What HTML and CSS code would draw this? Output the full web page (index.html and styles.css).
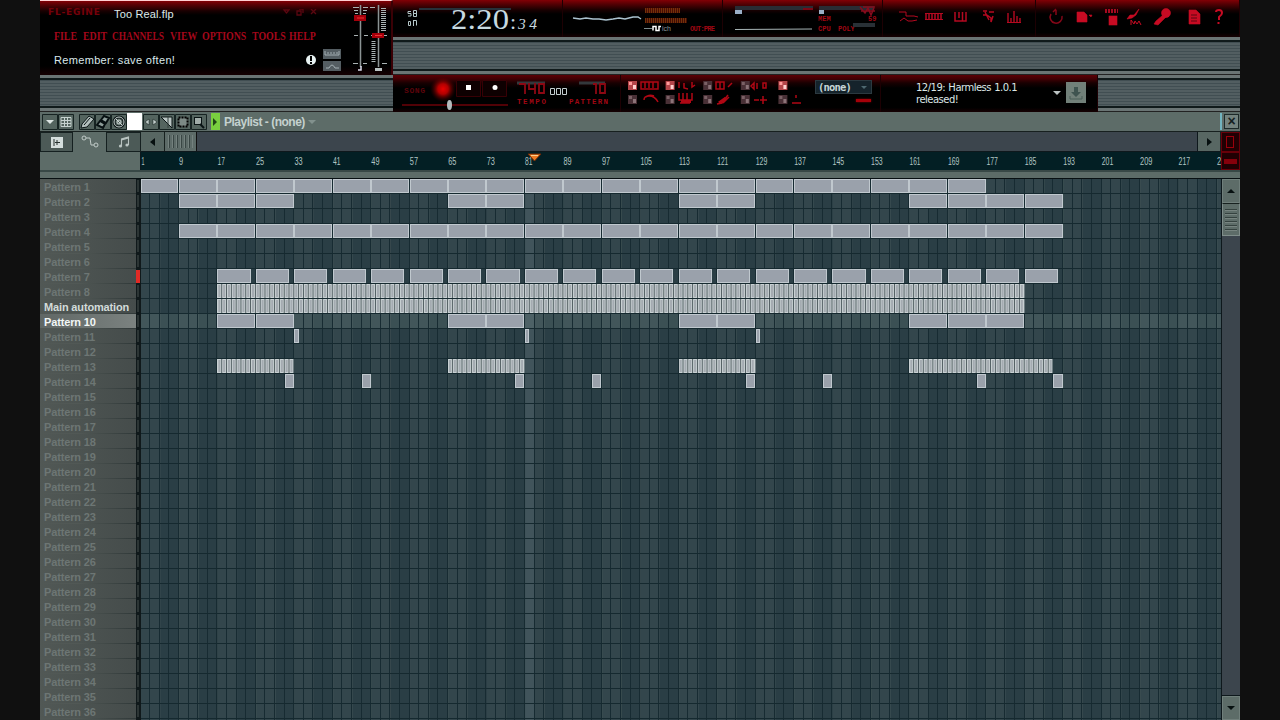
FILE: index.html
```html
<!DOCTYPE html>
<html lang="en">
<head>
<meta charset="utf-8">
<title>Too Real.flp</title>
<link rel="stylesheet" href="styles.css">
</head>
<body>
<div class="app">
  <header class="top">
    <div class="col-left">
      <section class="panel main-panel">
        <div class="main-info">
          <div class="title-row"><span class="logo">FL-EGINE</span><span class="file">Too Real.flp</span>
            <svg class="winbtns" width="36" height="10"><path d="M2 1h5L4.500 4zM15 2h4v4h-4zM17 0h4v4M29 0l5 5M34 0l-5 5" fill="none" stroke="#5c0711" stroke-width="1.300"/></svg></div>
          <nav class="menu"><span class="m1">FILE</span><span class="m2">EDIT</span><span class="m3">CHANNELS</span><span class="m4">VIEW</span><span class="m5">OPTIONS</span><span class="m6">TOOLS</span><span class="m7">HELP</span></nav>
          <div class="hint"><span>Remember: save often!</span>
            <svg width="38" height="24"><circle cx="7" cy="12" r="5" fill="#e8f2f2"/><path d="M7 8v5M7 14v2" stroke="#000" stroke-width="2"/><rect x="19" y="1" width="18" height="10" fill="#545d62"/><rect x="19" y="13" width="18" height="10" fill="#545d62"/><path d="M21 3v4h14v-4M24 4v2M27 4v2M30 4v2M33 4v2M22 20h3q3-6 6 0h4" fill="none" stroke="#a3afb3"/></svg></div>
        </div>
        <svg class="faders" width="38" height="74">
          <path d="M7.500 4v62M25.500 4v62" stroke="#8b9394" stroke-width="1.500"/>
          <path d="M0 6.500h6M10 6.500h5M1 9.500h4M10 9.500h4M2 12.500h3M10 12.500h3M1 34.500h4M11 34.500h4M0 62.500h5M10 62.500h4M17 6.500h5M18 34.500h3M31 34.500h3M29 62.500h5" stroke="#a9b2b3"/>
          <path d="M30.500 7v24" stroke="#a9b2b3" stroke-width="5" stroke-dasharray="1 1"/><path d="M20.500 40v22" stroke="#a9b2b3" stroke-width="4" stroke-dasharray="1 1"/>
          <rect x="1" y="14" width="12" height="6" fill="#a5000b"/><rect x="19" y="32" width="12" height="5" fill="#a5000b"/><path d="M4 17h7M22 34.500h7" stroke="#e33"/>
          <path d="M5 69h3v-4" stroke="#dde" fill="none" stroke-width="1.500"/><rect x="22" y="67" width="7" height="3" fill="#b9c1c2"/>
        </svg>
      </section>
      <div class="stripes grow"></div>
    </div>
    <div class="col-right">
      <div class="row first">
        <section class="panel time"><svg width="169" height="37">
          <rect x="26" y="8" width="92" height="2" fill="#26313a"/>
          <g fill="none" stroke="#b4c6c8"><path d="M18 11.500h-3v2h3v2.500h-3M15.500 21.500h2v4h-2z"/><path d="M20.500 10.500h3v6h-3zM20.500 13.500h3M20.500 20.500h3v5M20.500 20v6"/></g>
          <text class="clock" x="58" y="29" font-size="30" textLength="58" lengthAdjust="spacingAndGlyphs">2:20</text><text class="clock" x="117" y="29" font-size="22">:</text><text class="clock it" x="125" y="29" font-size="15.500" textLength="19">34</text>
        </svg></section>
        <section class="panel scope"><svg width="159" height="37">
          <path d="M10 18l7 1 6-1 7 1 6 0 7 1 7-1 6-1 6 1 8-2 5 0 3 2" fill="none" stroke="#abc2cf" stroke-width="1.500"/>
          <path d="M82 10.500h35M82 20.500h42" stroke="#6e1508" stroke-width="5" opacity=".6"/><path d="M82 10.500h35M82 20.500h42" stroke="#7e3c0b" stroke-width="5" stroke-dasharray="1 1" opacity=".8"/>
          <path d="M81 28.500h8" stroke="#7c8a8c"/><path d="M90 30.500v-4h3v4h3v-4h2" fill="none" stroke="#fff" stroke-width="1.500"/><text x="99" y="31" font-size="7" fill="#8a9698">ich</text>
          <text class="lcd" x="127" y="31" font-size="7" textLength="25">OUT:PRE</text>
        </svg></section>
        <section class="panel cpu"><svg width="159" height="37">
          <rect x="12" y="6" width="78" height="4" fill="#292c34"/><rect x="12" y="10" width="7" height="4" fill="#9aafc6"/><path d="M80 9h10" stroke="#7b0816" stroke-width="2"/>
          <path d="M12 29.500L89 29" stroke="#a7b5b6"/><rect x="96" y="6" width="55" height="4" fill="#292c34"/><rect x="96" y="10" width="5" height="4" fill="#9aafc6"/>
          <text class="lcd" x="95" y="21" font-size="7">MEM</text><text class="lcd" x="145" y="21" font-size="7">59</text><text class="lcd" x="95" y="31" font-size="7">CPU</text><text class="lcd" x="115" y="31" font-size="7">POLY</text>
          <rect x="130" y="23" width="22" height="4" fill="#293036"/><path d="M137 7l5 6 3-5 3 7 3-7M140 7h12M138 11h14" fill="none" stroke="#860c1d" stroke-width="1.500"/>
        </svg></section>
        <section class="panel shortcuts"><svg width="152" height="37" fill="none" stroke="#b50920" stroke-width="1.500">
          <path d="M16 12h7v4h8l4 1M17 21l4-3 4 3h4l5-1" stroke-width="1"/><path d="M43 14v6M46 14v6M49 14v6M52 14v6M55 14v6M58 14v6"/><path d="M42 13.500h18M42 19.500h18" stroke-width="1"/>
          <path d="M72 12v9h11v-9M76 12v6M79.500 12v9M72 21h11"/><path d="M100 11h4M100 15h3M106 12h5M104 15l4 3v4l2-6M102 12l4 8"/><path d="M125 23v-10M128 23v-5M131 23v-12M134 23v-7M137 23v-5" stroke-width="1.400"/><path d="M124 22.500h14" stroke-width="1"/>
        </svg></section>
        <section class="panel tools"><svg width="203" height="37" fill="#c70b23" stroke="#c70b23" stroke-width=".6">
          <path d="M15 14a6 6 0 1 0 11 2M20 10v5M17 12l3-3" fill="none" stroke="#850718" stroke-width="1.500"/>
          <path d="M41 12h7l3 3v7H41zM44 18h4M53 15h3l-1 2z"/><path d="M69 11h13" fill="none" stroke="#a50920" stroke-width="4" stroke-dasharray="2 1"/><rect x="73" y="16" width="8" height="9"/>
          <path d="M103 9l-5 6h-4l-3 4 5-1 4-3z"/><path d="M95 25v-5l3 4 1-3 2 3 2-3 2 4" fill="none" stroke-width="1"/><circle cx="130" cy="13" r="4.500"/><path d="M127 15l-7 6-2 3 4 1 8-8z"/><path d="M153 10h7l4 4v10h-11z"/><path d="M155 15h6M155 18h6M155 21h6" stroke="#5b0711" stroke-width="1"/><path d="M180 12q0-2 3-2t3 3q0 2-3 4v3M182.500 22v2" fill="none" stroke-width="2"/>
        </svg></section>
      </div>
      <div class="stripes mid"></div>
      <div class="row second">
        <section class="panel transport"><svg width="227" height="37">
          <defs><radialGradient id="play"><stop offset="0" stop-color="#e80000"/><stop offset=".4" stop-color="#b00000"/><stop offset="1" stop-color="#400000" stop-opacity="0"/></radialGradient></defs>
          <text class="lcd dim" x="11" y="18" font-size="8" textLength="21">SONG</text><circle cx="50" cy="14" r="13" fill="url(#play)"/>
          <path d="M63.500 5.500h24v16h-24zM89.500 5.500h24v16h-24z" fill="#0e0001" stroke="#380005"/><rect x="73" y="10" width="5" height="5" fill="#fff"/><circle cx="102" cy="12.500" r="2.500" fill="#fff"/>
          <path d="M9 30h106" stroke="#6c0209" stroke-width="1.500"/><ellipse cx="56.500" cy="30" rx="2.500" ry="5" fill="#b4babd"/>
          <path d="M124 8h28M186 8h26" stroke="#33383c" stroke-width="3"/>
          <g fill="none" stroke="#8d0813" stroke-width="1.800"><path d="M126 9h6v10M136 8v6h6M142 8v11M146 9h5v9h-5zM200 9h3v10M207 9h5v9h-5z"/></g>
          <g fill="none" stroke="#c4ced0"><path d="M157.500 13.500h4v6h-4zM163.500 13.500h4v6h-4zM169.500 13.500h4v6h-4z"/></g>
          <text class="lcd" x="124" y="29" font-size="7.500" textLength="29">TEMPO</text><text class="lcd" x="176" y="29" font-size="7.500" textLength="39">PATTERN</text>
        </svg></section>
        <section class="panel snap">
          <svg width="190" height="37"><g id="leds"></g>
          <g fill="none" stroke="#b00714" stroke-width="1.500"><path d="M20 7h17v7H20zM24 7v6M28 7v6M32 7v6M23 25q0-4 5-4 6 0 9 6M25 22q3-3 8-1M58 7v6M63 8v5l4 1M71 7v5l3-2M58 18v7h13v-7M62 18v7M66 18v7M59 28h10M95 7h8v7h-8zM99 7v7M107 12l4-4M96 29l5-1 6-8M102 28l6-6M133 8l-3 3 3 3zM136 8v6M142 8h3v5h-3zM133 25h5M142 21v8M139 25h7M171 28h9M175 20v3"/><path d="M60 26.500h10M98 28l7-5" stroke-width="3"/></g></svg>
          <div class="select-wrap"><div class="select"><span>(none)</span><i></i></div><b class="led-bar"></b></div>
        </section>
        <section class="panel news"><p>12/19: Harmless 1.0.1<br>released!</p><i class="arrow"></i>
          <svg width="20" height="21"><rect width="20" height="21" fill="#718079"/><path d="M8 5h4v5h3l-5 5-5-5h3z" fill="#3f5450"/><path d="M4 14v3h12v-3" fill="none" stroke="#4b5f58"/></svg></section>
        <div class="stripes grow"></div>
      </div>
    </div>
  </header>

  <div class="titlebar">
    <svg width="170" height="19">
      <g fill="#54645f" stroke="#162322"><path d="M1.500 2.500h15v15h-15zM17.500 2.500h15v15h-15zM38.500 2.500h15v15h-15zM54.500 2.500h15v15h-15zM70.500 2.500h15v15h-15zM102.500 2.500h15v15h-15zM118.500 2.500h15v15h-15zM134.500 2.500h15v15h-15zM150.500 2.500h15v15h-15z"/></g>
      <g transform="translate(0 1)"><path d="M5 7h8l-4 4z" fill="#dce4e2"/><path d="M20 4.500h10v9H20zM23.500 4v10M26.500 4v10M20 7.500h10M20 10.500h10" fill="none" stroke="#c6d2cf"/>
      <path d="M41 11l7-8 5 3-7 8-6 1z" fill="#b3bfbd" stroke="#0a1415"/><path d="M43 12l6-7" stroke="#0a1415"/>
      <path d="M56 12l3-4 5 3-2 4zM60 7l3-4 5 2-3 5z" fill="#8d9c99" stroke="#071012" stroke-width="2"/>
      <circle cx="78" cy="9" r="5" fill="none" stroke="#0a1415" stroke-width="3"/><circle cx="78" cy="9" r="5" fill="none" stroke="#cdd6d4"/><circle cx="78" cy="9" r="2" fill="none" stroke="#cdd6d4"/><path d="M75 6l6 6" stroke="#cdd6d4"/>
      <rect x="86" y="0" width="15" height="17" fill="#fff"/><path d="M108 6v6l-4-3zM112 6v6l4-3z" fill="#c2cecb" stroke="#0a1415" stroke-width=".5"/>
      <path d="M120 4h11v11z" fill="#bac5c3" stroke="#0a1415"/><path d="M127 4v11" stroke="#34403f"/><rect x="137.500" y="4.500" width="9" height="9" fill="#7c8985" stroke="#000" stroke-width="2" stroke-dasharray="2 1"/>
      <rect x="153.500" y="4.500" width="7" height="7" fill="#a0aca9" stroke="#0a1415"/><path d="M159 11l4 4" stroke="#0a1415" stroke-width="2"/></g>
    </svg>
    <span class="tag"></span><span class="ttl">Playlist - (none)</span><i class="caret"></i><span class="spacer"></span><span class="cyan"></span><span class="close">×</span>
  </div>

  <div class="navrow">
    <div class="tabs">
      <div class="tab dark"><svg width="14" height="13"><rect x="1" y="1" width="12" height="11" fill="#d5dedd"/><path d="M4 3v7M5 6.500h5M7 4v5" stroke="#27312f"/></svg></div>
      <div class="tab"><svg width="18" height="14" fill="none" stroke="#c1cbc8"><circle cx="3" cy="3" r="2"/><path d="M5 3h4l1 7h3"/><circle cx="15" cy="10" r="2"/></svg></div>
      <div class="tab dark"><svg width="12" height="13"><path d="M3.500 10V3l7-2v8M3.500 4l7-2" fill="none" stroke="#b9c4c1" stroke-width="1.100"/><circle cx="2.500" cy="10" r="1.600" fill="#b9c4c1"/><circle cx="9" cy="9" r="1.600" fill="#b9c4c1"/></svg></div>
    </div>
    <div class="hscroll"><div class="btn left"></div><div class="grip"></div><div class="track"></div><div class="btn right"></div></div>
    <div class="redbox"><i></i></div>
  </div>
  <div class="rulerrow"><div class="ruler-left"></div><svg id="ruler" width="1080" height="18"></svg><div class="redbar"><i></i></div></div>
  <div class="gap"></div>

  <main class="body">
    <div id="names" class="names"></div>
    <svg id="grid" width="1085" height="541"></svg>
    <div class="vscroll"><div class="vbtn up"></div><div class="vthumb"></div><div class="vtrack"></div><div class="vbtn down"></div></div>
  </main>
</div>
<script src="app.js"></script>
</body>
</html>
```

FILE: styles.css
```css
* { box-sizing: border-box; }
body { margin: 0; background: #101010; font-family: "Liberation Sans", Arial, sans-serif; overflow: hidden; }
svg { display: block; flex: none; }
.app { width: 1200px; height: 720px; margin: 0 auto; display: flex; flex-direction: column; background: #566663; overflow: hidden; }

.top { display: flex; height: 112px; flex: none; background: #080202; }
.col-left { width: 353px; display: flex; flex-direction: column; }
.col-right { flex: 1; display: flex; flex-direction: column; }
.row { display: flex; height: 37px; }
.panel { background: linear-gradient(#820006 0, #550004 4px, #180001 10px, #000 14px, #000 88%, #160002); border-right: 1px solid #1d0003; overflow: hidden; }
.second .panel { background: linear-gradient(#5c0005 0, #400004 4px, #180001 8px, #000 13px, #000 88%, #160002); }
.stripes { background: linear-gradient(#6a7474 0 3px, #101a1b 3px 5px, transparent 5px calc(100% - 6px), #101a1b calc(100% - 6px) calc(100% - 4px), #6a7474 calc(100% - 4px) calc(100% - 1px), #222 calc(100% - 1px)), repeating-linear-gradient(#525e61 0 2px, #414e52 2px 3px); }
.grow { flex: 1; }
.mid { height: 38px; }
.time { width: 170px; } .scope { width: 160px; } .cpu { width: 160px; } .shortcuts { width: 153px; } .tools { width: 204px; }
.transport { width: 228px; } .snap { width: 260px; display: flex; } .news { width: 217px; display: flex; }
.clock { font-family: "Liberation Serif", serif; fill: #c7d9e0; }
.it { font-style: italic; }
.lcd { font-family: "Liberation Mono", monospace; font-weight: bold; fill: #9f0713; }
.dim { fill: #5d040b; }

.main-panel { height: 75px; display: flex; border-top: 1px solid #ffcdd1; border-right: 2px solid #3a0005; }
.main-info { width: 313px; padding: 4px 0 0 14px; }
.title-row { display: flex; height: 17px; align-items: center; }
.logo { width: 60px; margin-left: -6px; color: #74000a; font: bold 9px/9px "DejaVu Sans", sans-serif; letter-spacing: .8px; height: 12px; white-space: nowrap; }
.file { flex: 1; padding-left: 6px; color: #dce9ea; font-size: 11px; letter-spacing: .15px; }
.winbtns { margin-right: 33px; }
.menu { display: flex; height: 25px; padding-top: 7px; color: #a3071b; font: bold 12px/14px "Liberation Serif", serif; }
.menu span { white-space: nowrap; transform-origin: left; transform: scaleX(.82); }
.menu .m3 { transform: scaleX(.78); }
.m1 { width: 29px; } .m2 { width: 29px; } .m3 { width: 58px; } .m4 { width: 32px; } .m5 { width: 50px; } .m6 { width: 37px; } .m7 { width: 30px; }
.hint { display: flex; justify-content: space-between; height: 24px; margin-top: 1px; padding-right: 10px; align-items: center; color: #dbe8ea; font-size: 11px; letter-spacing: .33px; }
.hint svg { margin: -1px -1px 0 0; }
.faders { margin-left: 2px; }

.select-wrap { padding-top: 5px; margin-left: 4px; }
.select { width: 57px; height: 14px; background: #15232b; border: 1px solid #2b3940; color: #c5d5d6; font: bold 10.500px/12px "DejaVu Sans Mono", monospace; letter-spacing: -.8px; padding: 0 4px 0 2px; display: flex; justify-content: space-between; align-items: center; }
.select i { border: 3px solid transparent; border-top-color: #4e6870; border-bottom: 0; }
.led-bar { display: block; width: 15px; height: 3px; margin: 5px 0 0 41px; background: #a50009; box-shadow: 0 0 2px #900; }
.news p { margin: 7px 0 0 35px; width: 131px; color: #dce6e6; font: 10px/12px "DejaVu Sans", sans-serif; letter-spacing: -.5px; word-spacing: .5px; white-space: nowrap; }
.arrow { width: 8px; height: 4px; margin: 16px 5px 0 6px; border: 4px solid transparent; border-top-color: #bcc3c2; border-bottom: 0; }
.news svg { margin-top: 7px; }

.titlebar { height: 20px; flex: none; display: flex; align-items: center; padding: 0 1px 0 1px; background: #5d6c68; border-bottom: 1px solid #17201f; }
.tag { width: 9px; height: 17px; background: #79cf3f; display: flex; align-items: center; }
.tag::after { content: ""; margin-left: 2px; border: 4px solid transparent; border-left-color: #204716; border-right: 0; }
.ttl { margin-left: 4px; color: #c4d1ce; font-weight: bold; font-size: 12px; width: 82px; white-space: nowrap; letter-spacing: -.5px; }
.caret { margin-left: 2px; border: 4px solid transparent; border-top-color: #82918d; border-bottom: 0; }
.spacer { flex: 1; }
.cyan { width: 2px; height: 17px; background: #72b4bf; margin-right: 2px; }
.close { width: 15px; height: 15px; border: 1px solid #1c2928; background: #73827e; color: #14201f; font: bold 14px/12px "Liberation Sans", sans-serif; text-align: center; }

.navrow { display: flex; height: 20px; flex: none; }
.tabs { width: 101px; display: flex; }
.tab { width: 33px; display: flex; align-items: center; justify-content: center; background: #5d6c68; }
.tab.dark { background: #4c5a57; border: 1px solid #152020; }
.tab:last-child { width: 35px; }
.hscroll { flex: 1; display: flex; border-bottom: 1px solid #0e181c; }
.btn { width: 24px; background: #586763; border-right: 1px solid #17211f; display: flex; align-items: center; justify-content: center; }
.btn.left::after { content: ""; border: 4px solid transparent; border-right: 5px solid #071010; border-left: 0; }
.btn.right::after { content: ""; border: 4px solid transparent; border-left: 5px solid #071010; border-right: 0; }
.btn.right { border-left: 1px solid #0e181c; }
.grip { width: 32px; background: #5d6b68; border-right: 1px solid #111; padding: 3px; }
.grip::after { content: ""; display: block; height: 13px; background: repeating-linear-gradient(90deg, #74817e 0 1px, #394644 1px 2px, #5d6b68 2px 4px); }
.track { flex: 1; background: #3c454d; }
.redbox { width: 19px; background: #210003; border: 1px solid #680009; padding: 3px 0 0 4px; }
.redbox i { display: block; width: 8px; height: 12px; border: 1px solid #9a000b; }
.rulerrow { display: flex; height: 18px; flex: none; }
.ruler-left { width: 101px; background: #5d6c68; border-right: 1px solid #0e181c; }
#ruler { background: #031f24; }
.rl { font-family: "Liberation Sans", sans-serif; font-size: 11px; fill: #b2c5c3; }
.redbar { width: 19px; background: #210003; border: 1px solid #680009; padding: 6px 2px; }
.redbar i { display: block; height: 5px; background: #85000b; }
.gap { height: 9px; flex: none; background: #5d6c68; border-top: 2px solid #384846; border-bottom: 1px solid #081012; }

.body { display: flex; height: 541px; flex: none; }
.names { width: 96px; background: linear-gradient(90deg, #515855, #454c4b); }
.name { height: 15px; padding-left: 4px; border-bottom: 1px solid; border-image: linear-gradient(90deg, #515855 40%, #2f3838) 1; color: #6d7674; font: bold 11px/16px "Liberation Sans", sans-serif; white-space: nowrap; letter-spacing: -.15px; }
.name.auto { color: #d2dbd9; }
.name.active { color: #f2f7f6; background: linear-gradient(90deg, #606765, #7b8280); }
.vscroll { width: 19px; display: flex; flex-direction: column; border-left: 1px solid #0e181c; }
.vbtn { height: 24px; background: #5d6c68; border: 1px solid #707f7b; display: flex; align-items: center; justify-content: center; }
.up::after { content: ""; border: 4px solid transparent; border-bottom-color: #071010; border-top: 0; }
.down::after { content: ""; border: 4px solid transparent; border-top-color: #071010; border-bottom: 0; }
.vthumb { height: 33px; background: #5d6c68; border: 1px solid #7f8d8a; border-top-color: #17211f; padding: 5px 2px; }
.vthumb::after { content: ""; display: block; height: 22px; background: repeating-linear-gradient(#35423f 0 1px, #778480 1px 2px, #5d6c68 2px 4px); }
.vtrack { flex: 1; background: #3c454d; border-bottom: 1px solid #0e181c; }
```

FILE: app.js
```js
const BAR = 4.805;   // width of one bar
const ROW = 15;
const X0 = 5;        // start of bar 1, after the mute strip
const x = bar => X0 + (bar - 1) * BAR;
const rect = (l, t, w, h, fill, extra = '') =>
  `<rect x="${l.toFixed(2)}" y="${t}" width="${w.toFixed(2)}" height="${h}" fill="${fill}" ${extra}/>`;

// Pattern names
let names = '';
for (let i = 1; i <= 36; i++) {
  const cls = i === 9 ? ' auto' : i === 10 ? ' active' : '';
  names += `<div class="name${cls}">${i === 9 ? 'Main automation' : 'Pattern ' + i}</div>`;
}
document.getElementById('names').innerHTML = names;

// Ruler
let ruler = '';
for (let b = 1; b <= 225; b += 8) {
  const s = String(b);
  const w = b === 1 ? 3 : s.length * 4.1 - (s.match(/1/g) || []).length * .7;
  ruler += `<text class="rl" x="${((b - 1) * BAR + (b === 1 ? .5 : -.3)).toFixed(1)}" y="13" textLength="${w}" lengthAdjust="spacingAndGlyphs">${s}</text>`;
}
ruler += '<path d="M387 2h13l-6.500 7z" fill="#ed7a22" stroke="#6e2b08"/><path d="M390 3.500h7" stroke="#ffd08a"/>';
document.getElementById('ruler').innerHTML = ruler;

// Grid background
let g = '';
for (let b = 1, k = 0; b < 226; b += 4, k++) {
  g += rect(x(b), 0, BAR * 4, 541, k % 2 ? '#2a3e45' : '#33464c');
}
g += rect(x(81), 0, 9.6, 541, '#5b7078', 'opacity=".35"');
g += rect(X0, 135, 1080, 15, '#7d908f', 'opacity=".22"');
for (let b = 1; b < 227; b += 2) g += rect(Math.floor(x(b)) - 1, 0, 1, 541, '#172b32');
for (let r = 1; r <= 36; r++) g += rect(X0, r * ROW - 1, 1080, 1, '#15292f');
g += rect(0, 0, 5, 541, '#10191b');
for (let r = 0; r < 36; r++) g += rect(1, r * ROW + 1, 2, 12, r === 6 ? '#f02a24' : '#2c3535');
g += rect(0, 91, 4, 13, '#e12a25');

// Clips
const clip = (row, bar, len) => {
  const l = Math.floor(x(bar)), r = Math.round(x(bar + len)) - 1;
  g += rect(l + .5, (row - 1) * ROW + .5, Math.max(2, r - l - 1), 13, '#9aa1ab', 'stroke="#c0c8ce"');
};
const run = (row, from, to, step = 8, len = step) => {
  for (let b = from; b < to; b += step) clip(row, b, len);
};
const ticks = (row, from, to) => {
  const l = Math.floor(x(from)), r = Math.floor(x(to)) - 1, t = (row - 1) * ROW;
  g += rect(l, t, r - l + .5, 14, '#c8d0d2');
  for (let b = from; b < to; b += 1) {
    const s = x(b) - .5;
    g += rect(s + 1, t + 1, 2, 12, '#a4abb1');
    if (b > from) g += rect(s - .9, t, .9, 14, '#49565a');
  }
};
run(1, 1, 177);
[[9, 33], [65, 81], [113, 129], [161, 193]].forEach(p => run(2, ...p));
run(4, 9, 193);
run(7, 17, 193, 8, 7);
ticks(8, 17, 185);
ticks(9, 17, 185);
[[17, 33], [65, 81], [113, 129], [161, 185]].forEach(p => run(10, ...p));
[33, 81, 129].forEach(b => clip(11, b, 1));
[[17, 33], [65, 81], [113, 129], [161, 191]].forEach(p => ticks(13, ...p));
[31, 47, 79, 95, 127, 143, 175, 191].forEach(b => clip(14, b, 2));
document.getElementById('grid').innerHTML = g;

// Snap LEDs
let leds = '';
for (let c = 0; c < 5; c++) for (let r = 0; r < 2; r++) {
  const on = r === 0 && (c < 2 || c === 4), lx = 7 + c * 37.6, ly = 6 + r * 14;
  leds += rect(lx, ly, 9, 9, on ? '#b5454a' : '#493036') +
    rect(lx + 1, ly + 1, 3, 3, on ? '#ff9b9b' : '#7a6065') + rect(lx + 5, ly + 4, 3, 4, on ? '#ffd0d0' : '#8b7378');
}
document.getElementById('leds').innerHTML = leds;
```
